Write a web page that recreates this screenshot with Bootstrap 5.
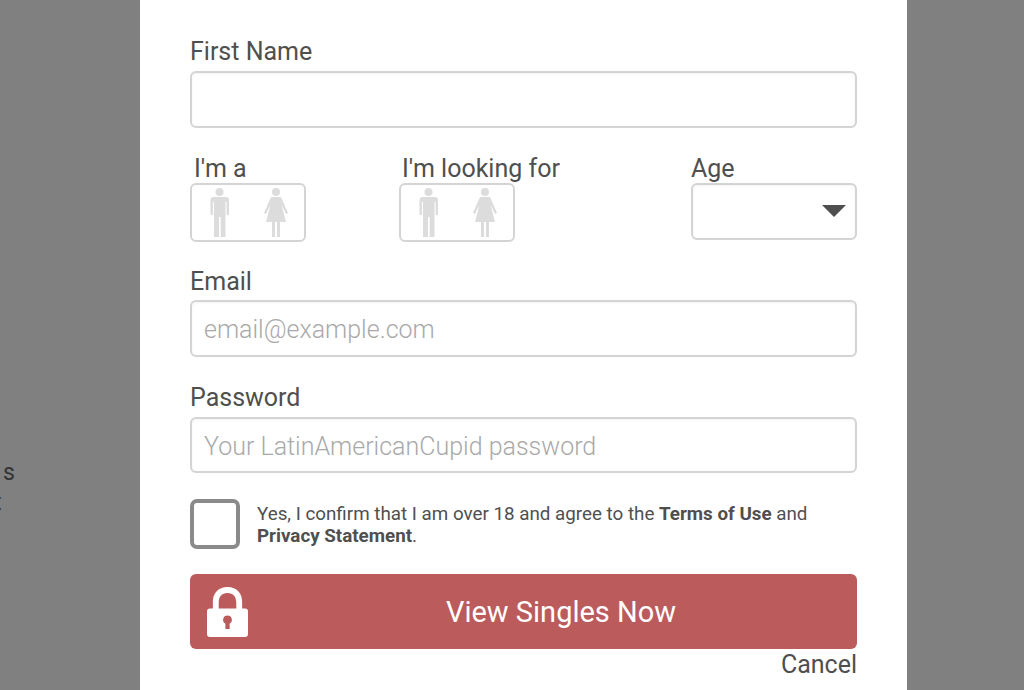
<!DOCTYPE html>
<html lang="en">
<head>
<meta charset="utf-8">
<title>Sign up</title>
<link rel="stylesheet" href="https://cdn.jsdelivr.net/npm/bootstrap@5.3.0/dist/css/bootstrap.min.css">
<style>
html,body{height:690px;overflow:hidden}
body{background:#808080;font-family:Roboto,"Liberation Sans",sans-serif;color:#4f4f4f}
.stage{height:690px}
.backdrop-side{width:140px;flex:none;padding:458px 0 0 3px;font-size:23px;line-height:30px;color:#333;overflow:hidden}
.backdrop-side span{display:block}
.backdrop-side .cut{margin-left:-9px}
.backdrop-right{flex:1}
.sheet{width:767px;flex:none;background:#fff;padding:37px 50px 0;height:690px;overflow:hidden}
.lbl{font-size:25px;line-height:27px;padding-top:1px;color:#4f4f4f;margin:0;display:block;font-weight:400}
.fld{height:57px;border:2px solid #d4d4d4;border-radius:6px;background:#fff;font-family:Roboto,sans-serif;font-size:25px;font-weight:300;color:#555;padding:2px 12px 0;box-shadow:inset 0 1px 3px rgba(0,0,0,.05)}
.fld::placeholder{color:#a9a9a9;opacity:1}
.fld:focus{border-color:#d4d4d4;box-shadow:none}
.gap-first{margin-top:6px}
.pick-row{margin-top:26px;height:88px}
.pick-row .lbl{margin-bottom:1px}
.pick-a{width:212px;padding-left:4px}
.pick-b{width:289px}
.pick-c{width:166px}
.pick{width:116px;height:59px;border:2px solid #d4d4d4;border-radius:6px;gap:34px;padding-left:18px;margin-left:-4px}
.pick-b .pick{margin-left:-3px}
.man{width:20px;height:50px;fill:#dcdcdc;flex:none}
.woman{width:24px;height:50px;fill:#dcdcdc;flex:none}
.age{height:57px;border:2px solid #d4d4d4;border-radius:6px;position:relative;box-shadow:inset 0 1px 3px rgba(0,0,0,.05)}
.age::after{content:"";position:absolute;right:9px;top:20px;border-style:solid;border-width:12px 12px 0;border-color:#4f4f4f transparent transparent}
.sec-email{margin-top:25px}
.sec-pass{margin-top:26px}
.fld-tight{margin-top:5px}
.fld-pass{margin-top:6px;height:56px}
.agree{margin-top:26px;gap:17px;font-size:18.800px;line-height:22px;color:#4f4f4f}
.agree b{font-weight:700}
.tick{width:50px;height:50px;flex:none;border:4px solid #8a8a8a;border-radius:7px;background:#fff;appearance:none;margin:0}
.agree p{margin:3.500px 0 0}
.go{height:75px;margin-top:25px;background:#bb5b5b;border:0;border-radius:6px;color:#fff;font-size:29px;position:relative;width:100%;padding:2px 0 0 75px;display:block;text-align:center}
.go:hover,.go:active{background:#bb5b5b!important;color:#fff!important}
.go svg{position:absolute;left:17px;top:12px;width:41px;height:51px;fill:#fff}
.cancel{font-size:25px;line-height:27px;padding-top:1px;color:#4f4f4f;text-align:right;display:block;text-decoration:none;margin-top:1px}
</style>
</head>
<body>
<svg width="0" height="0" class="position-absolute" aria-hidden="true">
<defs>
<symbol id="ic-man" viewBox="0 0 20 50"><circle cx="9.500" cy="4" r="4"/><path d="M3 9h13a3 3 0 0 1 3 3v14a1.200 1.200 0 0 1-2.400 0V14h-1.100v35h-4.800V29H9v20H4V14H2.900v12a1.200 1.200 0 0 1-2.400 0V12a3 3 0 0 1 2.500-3z"/></symbol>
<symbol id="ic-woman" viewBox="0 0 24 50"><circle cx="12" cy="4" r="4"/><path d="M8.500 9h7c1 0 1.700.5 2.200 1.400L24 25l-2 1-4.500-9.500L22 34h-6v15h-3V34h-2v15H8V34H2l4.500-17.500L2 26l-2-1 6.300-14.600C6.800 9.500 7.500 9 8.500 9z"/></symbol>
</defs>
</svg>
<div class="stage d-flex">
  <div class="backdrop-side"><span>s</span><span class="cut">t</span></div>
  <main class="sheet">
    <form>
      <label class="lbl" for="fn">First Name</label>
      <input id="fn" class="form-control fld gap-first" type="text">
      <div class="pick-row d-flex">
        <div class="pick-a">
          <span class="lbl">I'm a</span>
          <div class="pick d-flex align-items-center">
            <svg class="man"><use href="#ic-man"/></svg><svg class="woman"><use href="#ic-woman"/></svg>
          </div>
        </div>
        <div class="pick-b">
          <span class="lbl">I'm looking for</span>
          <div class="pick d-flex align-items-center">
            <svg class="man"><use href="#ic-man"/></svg><svg class="woman"><use href="#ic-woman"/></svg>
          </div>
        </div>
        <div class="pick-c">
          <span class="lbl">Age</span>
          <div class="age"></div>
        </div>
      </div>
      <label class="lbl sec-email" for="em">Email</label>
      <input id="em" class="form-control fld fld-tight" type="text" placeholder="email@example.com">
      <label class="lbl sec-pass" for="pw">Password</label>
      <input id="pw" class="form-control fld fld-pass" type="password" placeholder="Your LatinAmericanCupid password">
      <div class="agree d-flex align-items-start">
        <input class="tick" type="checkbox" aria-label="Agree">
        <p>Yes, I confirm that I am over 18 and agree to the <b>Terms of Use</b> and<br><b>Privacy Statement</b>.</p>
      </div>
      <button type="button" class="btn go">
        <svg viewBox="0 0 42 52"><path d="M21 1C11 1 6 8 6 16v7H3a3 3 0 0 0-3 3v23a3 3 0 0 0 3 3h36a3 3 0 0 0 3-3V26a3 3 0 0 0-3-3h-3v-7C36 8 31 1 21 1zm0 6c6 0 9 4 9 10v6H12v-6c0-6 3-10 9-10zm0 23a4.500 4.500 0 0 1 2.200 8.400V44h-4.400v-5.600A4.500 4.500 0 0 1 21 30z" fill-rule="evenodd"/></svg>
        View Singles Now
      </button>
      <a class="cancel" href="#">Cancel</a>
    </form>
  </main>
  <div class="backdrop-right"></div>
</div>
<script src="https://cdn.jsdelivr.net/npm/bootstrap@5.3.0/dist/js/bootstrap.bundle.min.js"></script>
</body>
</html>
